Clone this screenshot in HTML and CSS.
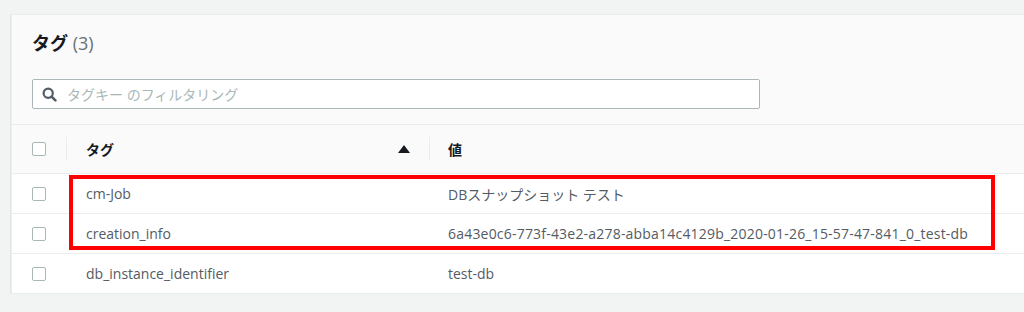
FILE: index.html
```html
<!DOCTYPE html>
<html>
<head>
    <meta charset="UTF-8">
    <title>タグ</title>
    <link rel="stylesheet" href="styles.css">
</head>
<body>
    <div class="card">
        <div class="card-header">
            <h2 class="title">タグ <span class="count">(3)</span></h2>
            <div class="filter">
                <svg class="search-icon" width="15" height="15" viewBox="0 0 15 15">
                    <circle cx="6.2" cy="6.2" r="4.6" fill="none" stroke="#545b64" stroke-width="2.2"/>
                    <line x1="9.6" y1="9.6" x2="13.4" y2="13.4" stroke="#545b64" stroke-width="2.6" stroke-linecap="round"/>
                </svg>
                <span class="placeholder">タグキー のフィルタリング</span>
            </div>
        </div>
        <div class="table">
            <div class="row head">
                <div class="cell check"><span class="box"></span></div>
                <div class="cell key">タグ<span class="sort"></span></div>
                <div class="cell value">値</div>
            </div>
            <div class="row">
                <div class="cell check"><span class="box"></span></div>
                <div class="cell key">cm-Job</div>
                <div class="cell value">DBスナップショット テスト</div>
            </div>
            <div class="row">
                <div class="cell check"><span class="box"></span></div>
                <div class="cell key">creation_info</div>
                <div class="cell value long">6a43e0c6-773f-43e2-a278-abba14c4129b_2020-01-26_15-57-47-841_0_test-db</div>
            </div>
            <div class="row">
                <div class="cell check"><span class="box"></span></div>
                <div class="cell key">db_instance_identifier</div>
                <div class="cell value">test-db</div>
            </div>
            <!-- annotation over the first two rows -->
            <div class="highlight"></div>
        </div>
    </div>
</body>
</html>
```

FILE: styles.css
```css
body {
    margin: 0;
    background-color: #f2f3f3;
    font-family: "Open Sans", "Noto Sans CJK JP", sans-serif;
    font-size: 14px;
    color: #545b64;
    overflow: hidden;
}
.card {
    margin: 14px 0 0 11px;
    width: 1040px;
    background-color: #fafafa;
    border-top: 1px solid #eaeded;
    border-left: 1px solid #eaeded;
    box-shadow: 0 1px 1px 0 rgba(0, 28, 36, 0.3);
}
.card-header {
    padding: 17px 20px 15px 20px;
}
.title {
    margin: 0 0 25px 0;
    font-size: 18px;
    line-height: 22px;
    font-weight: bold;
    color: #16191f;
}
.count {
    font-weight: normal;
    color: #687078;
}
.filter {
    display: flex;
    align-items: center;
    box-sizing: border-box;
    width: 728px;
    height: 30px;
    border: 1px solid #aab7b8;
    border-radius: 2px;
    background-color: #fff;
    padding-left: 9px;
}
.search-icon {
    margin-right: 10px;
}
.placeholder {
    color: #aab7b8;
}
.table {
    position: relative;
    border-top: 1px solid #eaeded;
}
.row {
    display: grid;
    grid-template-columns: 54px 363px 1fr;
    height: 39px;
    border-bottom: 1px solid #eaeded;
    background-color: #fff;
}
.row:last-of-type {
    border-bottom: none;
    height: 40px;
}
.row.head {
    height: 48px;
    background-color: #fafafa;
    color: #16191f;
    font-weight: bold;
}
.cell {
    display: flex;
    align-items: center;
    white-space: nowrap;
}
.check {
    padding-left: 20px;
}
.box {
    width: 12px;
    height: 12px;
    border: 1px solid #aab7b8;
    border-radius: 2px;
    background-color: #fff;
}
.key {
    padding-left: 20px;
}
.value {
    padding-left: 19px;
}
.long {
    letter-spacing: 0.2px;
}
.head .key,
.head .value {
    position: relative;
}
.head .key::before,
.head .value::before {
    content: "";
    position: absolute;
    left: 0;
    top: 12px;
    height: 24px;
    border-left: 1px solid #eaeded;
}
.sort {
    margin-left: auto;
    margin-right: 19px;
    width: 0;
    height: 0;
    border-left: 6px solid transparent;
    border-right: 6px solid transparent;
    border-bottom: 8px solid #16191f;
}
.highlight {
    position: absolute;
    left: 57px;
    top: 50px;
    width: 918px;
    height: 67px;
    border: 4px solid #ff0000;
}
```
